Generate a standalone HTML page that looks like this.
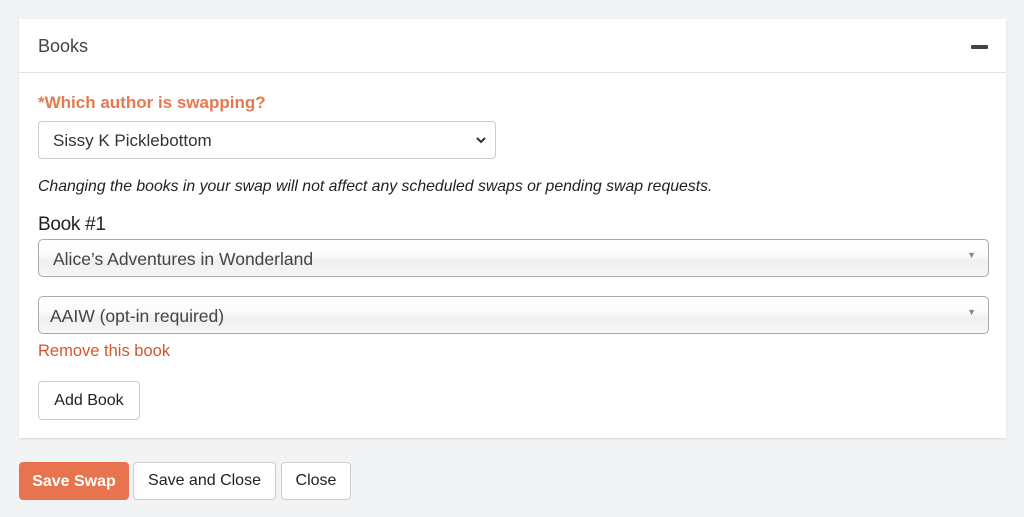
<!DOCTYPE html>
<html><head><meta charset="utf-8"><style>
*{box-sizing:border-box;margin:0;padding:0}
body{width:1024px;height:517px;background:#f2f3f5;font-family:"Liberation Sans",sans-serif;color:#333;position:relative;overflow:hidden}
.card{position:absolute;left:19px;top:19px;width:987px;height:419px;background:#fff;box-shadow:0 1px 2px rgba(0,0,0,.12)}
.hdr{height:54px;border-bottom:1px solid #e3e3e3;position:relative}
.hdr span{position:absolute;left:19px;top:17px;font-size:18px;color:#444}
.minus{position:absolute;right:18px;top:26px;width:17px;height:4px;background:#444;border-radius:1px}
.abs{position:absolute}
.lbl{left:19px;top:74px;font-size:17px;font-weight:bold;color:#e8784f}
.sel1{left:19px;top:102px;width:458px;height:38px;border:1px solid #ccc;border-radius:4px;font-size:17px;padding:9px 14px;color:#333}
.chev{position:absolute;right:8px;top:12px}
.note{left:19px;top:159px;font-size:15.8px;font-style:italic;color:#222}
.bk{left:19px;top:195px;font-size:19px;color:#222;letter-spacing:-.3px}
.sel2{left:19px;width:951px;height:38px;border:1px solid #aaa;border-radius:5px;background:linear-gradient(#fff 0,#fcfcfc 40%,#efefef 60%,#f6f6f6 100%);font-size:17.5px;color:#444;padding:9px 14px}
.tri{position:absolute;right:12px;top:10px;font-size:9px;color:#888}
.rm{left:19px;top:323px;font-size:16.5px;color:#d2562f}
.btn{border:1px solid #ccc;border-radius:4px;background:#fff;font-size:16px;color:#222;text-align:center}
</style></head><body>
<div class="card">
<div class="hdr"><span>Books</span><div class="minus"></div></div>
<div class="abs lbl">*Which author is swapping?</div>
<div class="abs sel1">Sissy K Picklebottom<svg class="chev" width="12" height="12" viewBox="0 0 12 12"><path d="M2 4l4 4 4-4" fill="none" stroke="#333" stroke-width="2"/></svg></div>
<div class="abs note">Changing the books in your swap will not affect any scheduled swaps or pending swap requests.</div>
<div class="abs bk">Book #1</div>
<div class="abs sel2" style="top:220px">Alice’s Adventures in Wonderland<span class="tri">▼</span></div>
<div class="abs sel2" style="top:277px;padding-left:11px">AAIW (opt-in required)<span class="tri">▼</span></div>
<div class="abs rm">Remove this book</div>
<div class="abs btn" style="left:19px;top:362px;width:102px;height:39px;line-height:37px">Add Book</div>
</div>
<div class="abs btn" style="left:19px;top:462px;width:110px;height:38px;line-height:38px;background:#e8744f;border-color:#e8744f;color:#fff;font-weight:bold">Save Swap</div>
<div class="abs btn" style="left:133px;top:462px;width:143px;height:38px;line-height:36px">Save and Close</div>
<div class="abs btn" style="left:281px;top:462px;width:70px;height:38px;line-height:36px">Close</div>
</body></html>
